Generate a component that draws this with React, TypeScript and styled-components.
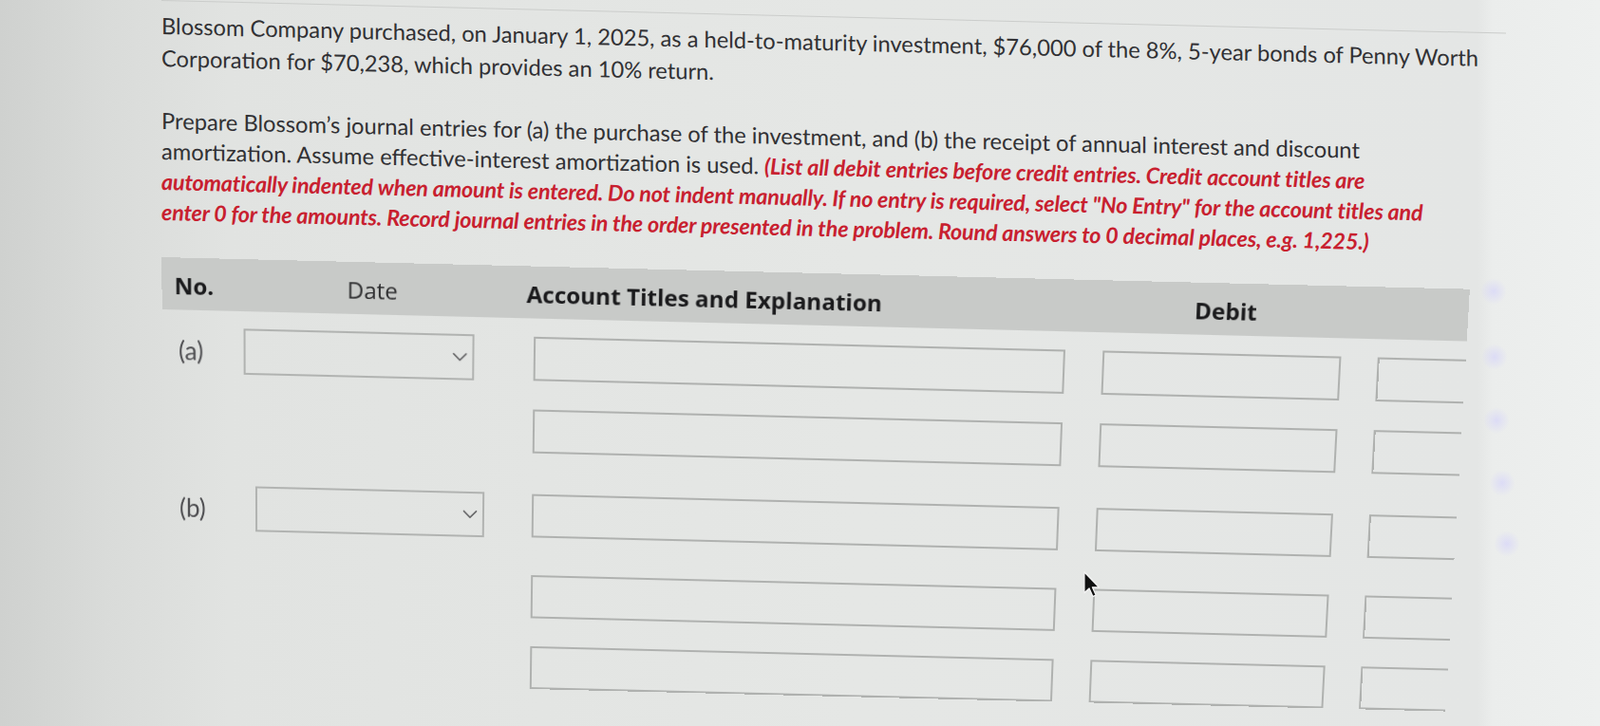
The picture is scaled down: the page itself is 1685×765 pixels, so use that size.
import styled, { createGlobalStyle } from "styled-components";
import { ChevronDown } from "lucide-react";

const GlobalStyle = createGlobalStyle`
  html, body {
    margin: 0;
    padding: 0;
  }
  body {
    width: 1685px;
    height: 765px;
    overflow: hidden;
    background: linear-gradient(
      90deg,
      #cfd1cf 0px,
      #d9dbd9 110px,
      #e1e3e1 240px,
      #e5e7e5 900px,
      #e4e6e5 1556px,
      #ebedec 1572px,
      #eef0ef 1685px
    );
    font-family: Lato, "Open Sans", sans-serif;
  }
`;

const Screen = styled.div`
  position: relative;
  width: 1685px;
  height: 765px;
`;

/* the photo is taken at a slight angle, so the whole sheet leans */
const Sheet = styled.div`
  width: 1416px;
  margin-left: 170px;
  border-top: 1px solid #cbcdcb;
  transform: skewY(1.4deg);
  transform-origin: 0 0;
`;

const Prompt = styled.p<{ $lh: number; $mt: number }>`
  margin: ${(p) => p.$mt}px 0 0;
  font-size: 23.7px;
  line-height: ${(p) => p.$lh}px;
  color: #313134;
  white-space: nowrap;
`;

const Warning = styled.span`
  color: #c8202f;
  font-size: 23.3px;
  letter-spacing: -0.17px;
  font-weight: 700;
  font-style: italic;
`;

/* lower rows sit a little further from the camera: slight keystone */
const Table = styled.div`
  margin: 34px 0 0 2px;
  width: 1361px;
  overflow: hidden;
  transform: perspective(2000px) rotateX(-5.39deg);
  transform-origin: 140px 257px;
`;

const HeaderBar = styled.div`
  display: flex;
  height: 54px;
  box-sizing: border-box;
  padding-top: 12px;
  background: #c8cac8;
  font-family: "Open Sans", sans-serif;
  font-size: 24px;
  line-height: 33px;
  color: #1d1d1f;
`;

const HeadCell = styled.div<{ $w?: number; $pad: number; $bold?: boolean }>`
  flex: ${(p) => (p.$w ? `0 0 ${p.$w}px` : "1")};
  box-sizing: border-box;
  padding-left: ${(p) => p.$pad}px;
  font-weight: ${(p) => (p.$bold ? 700 : 400)};
  color: ${(p) => (p.$bold ? "#1a1a1c" : "#2e2e30")};
  white-space: nowrap;
`;

const Row = styled.div<{ $mt: number }>`
  display: grid;
  grid-template-columns: 85px 303px 594px 287px 1fr;
  align-items: center;
  height: 46px;
  margin-top: ${(p) => p.$mt}px;
`;

const EntryLabel = styled.div`
  padding-left: 17px;
  font-size: 26px;
  color: #4f4f52;
`;

const DateSelect = styled.div<{ $shift: number }>`
  display: flex;
  align-items: center;
  justify-content: flex-end;
  box-sizing: border-box;
  width: 241px;
  height: 48px;
  margin-left: ${(p) => p.$shift}px;
  border: 2px solid #b1b3b1;
  color: #606062;
`;

const Field = styled.input<{ $w: number }>`
  display: block;
  box-sizing: border-box;
  width: ${(p) => p.$w}px;
  height: 46px;
  margin: 0;
  padding: 0 10px;
  border: 2px solid #afb1af;
  border-radius: 0;
  background: transparent;
  font: 20px Lato, sans-serif;
  outline: none;
`;

const Glare = styled.div`
  position: absolute;
  width: 26px;
  height: 30px;
  border-radius: 50%;
  background: radial-gradient(circle, rgba(210, 208, 252, 0.6) 0%, rgba(214, 214, 250, 0) 70%);
`;

const Pointer = styled.svg`
  position: absolute;
  left: 1141px;
  top: 602px;
`;

type Line = { date?: string; shift?: number; gap: number };

const entries: Line[] = [
  { date: "(a)", shift: 0, gap: 18 },
  { gap: 31 },
  { date: "(b)", shift: 12, gap: 42 },
  { gap: 41 },
  { gap: 30 },
];

const glares = [
  [1560, 292],
  [1561, 361],
  [1563, 428],
  [1569, 494],
  [1574, 558],
];

export default function App() {
  return (
    <Screen>
      <GlobalStyle />
      <Sheet>
        <Prompt $lh={34} $mt={9}>
          Blossom Company purchased, on January 1, 2025, as a held-to-maturity investment, $76,000 of the 8%, 5-year bonds of Penny Worth
          <br />
          Corporation for $70,238, which provides an 10% return.
        </Prompt>
        <Prompt $lh={32} $mt={33}>
          Prepare Blossom’s journal entries for (a) the purchase of the investment, and (b) the receipt of annual interest and discount
          <br />
          amortization. Assume effective-interest amortization is used.{" "}
          <Warning>
            (List all debit entries before credit entries. Credit account titles are
            <br />
            automatically indented when amount is entered. Do not indent manually. If no entry is required, select "No Entry" for the account titles and
            <br />
            enter 0 for the amounts. Record journal entries in the order presented in the problem. Round answers to 0 decimal places, e.g. 1,225.)
          </Warning>
        </Prompt>

        <Table>
          <HeaderBar>
            <HeadCell $w={193} $pad={13} $bold>
              No.
            </HeadCell>
            <HeadCell $w={187} $pad={0}>
              Date
            </HeadCell>
            <HeadCell $w={696} $pad={0} $bold>
              Account Titles and Explanation
            </HeadCell>
            <HeadCell $pad={0} $bold>
              Debit
            </HeadCell>
          </HeaderBar>

          {entries.map((line, i) => (
            <Row key={i} $mt={line.gap}>
              <EntryLabel>{line.date ?? ""}</EntryLabel>
              <div>
                {line.date && (
                  <DateSelect $shift={line.shift ?? 0}>
                    <ChevronDown size={26} strokeWidth={1.6} />
                  </DateSelect>
                )}
              </div>
              <Field $w={555} />
              <Field $w={249} />
              <Field $w={250} />
            </Row>
          ))}
        </Table>
      </Sheet>

      {glares.map(([x, y]) => (
        <Glare key={y} style={{ left: x, top: y }} />
      ))}

      <Pointer width="18" height="28" viewBox="0 0 12 19">
        <path
          d="M0.5 0.5 L0.5 15.5 L4 12.2 L6.6 18 L8.8 17 L6.3 11.4 L11 11.4 Z"
          fill="#111"
          stroke="#f4f4f4"
          strokeWidth="0.9"
          strokeLinejoin="round"
        />
      </Pointer>
    </Screen>
  );
}
